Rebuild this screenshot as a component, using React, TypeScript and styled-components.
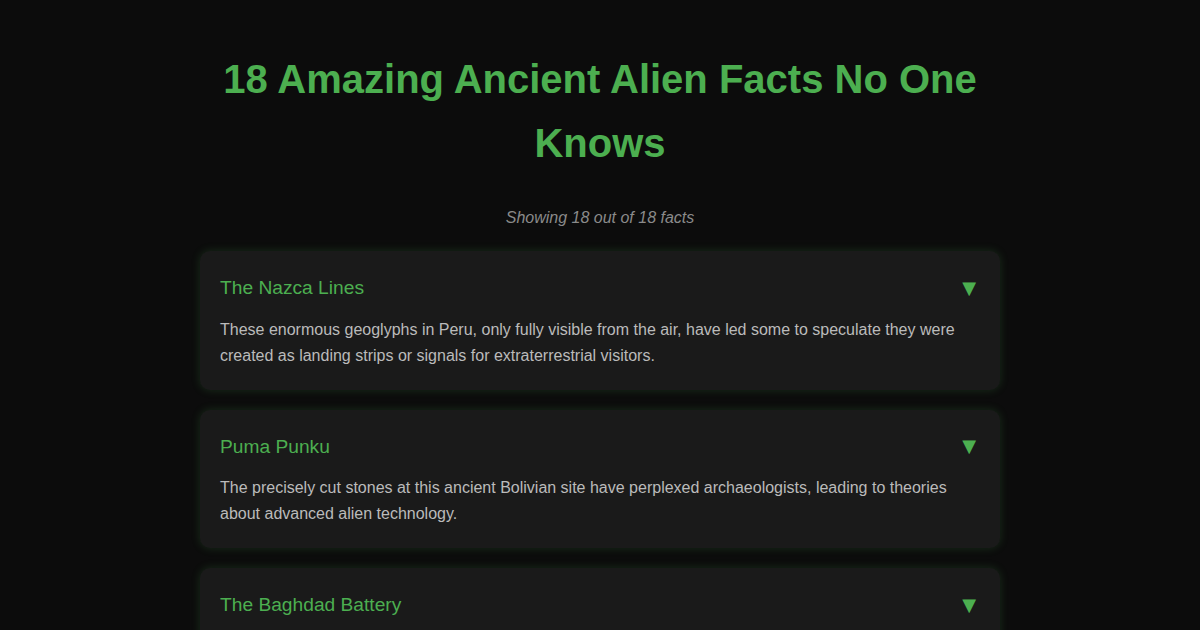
import React from 'react';
import styled, { createGlobalStyle } from 'styled-components';

const GlobalStyle = createGlobalStyle`
  body {
    margin: 0;
    background: #0c0c0c;
    font-family: 'Liberation Sans', Arial, sans-serif;
    color: #bbbbbb;
  }
`;

const Page = styled.div`
  max-width: 800px;
  margin: 0 auto;
  padding: 47px 0 40px;
`;

const Title = styled.h1`
  margin: 0 0 30px;
  font-size: 40px;
  line-height: 64px;
  font-weight: 700;
  text-align: center;
  color: #4caf50;
`;

const Count = styled.p`
  margin: 0 0 20px;
  font-size: 16px;
  line-height: 26px;
  font-style: italic;
  text-align: center;
  color: #8a8a8a;
`;

const List = styled.div`
  display: flex;
  flex-direction: column;
  gap: 20px;
`;

const Card = styled.div`
  background: #1a1a1a;
  border-radius: 10px;
  padding: 20px 20px 21px;
  box-shadow: 0 0 10px rgba(76, 175, 80, 0.2);
`;

const CardHeader = styled.div`
  display: flex;
  align-items: center;
  justify-content: space-between;
  height: 34px;
  margin-bottom: 11.5px;
`;

const FactTitle = styled.h2`
  margin: 0;
  font-size: 19.2px;
  font-weight: 400;
  color: #4caf50;
`;

const Toggle = styled.span`
  font-family: 'DejaVu Sans', sans-serif;
  font-size: 18px;
  color: #4caf50;
  margin-right: 4px;
  margin-bottom: 2px;
`;

const Body = styled.p`
  margin: 0;
  font-size: 16px;
  line-height: 26px;
  color: #bbbbbb;
`;

const facts = [
  {
    title: 'The Nazca Lines',
    text: 'These enormous geoglyphs in Peru, only fully visible from the air, have led some to speculate they were created as landing strips or signals for extraterrestrial visitors.',
  },
  {
    title: 'Puma Punku',
    text: 'The precisely cut stones at this ancient Bolivian site have perplexed archaeologists, leading to theories about advanced alien technology.',
  },
  {
    title: 'The Baghdad Battery',
    text: 'These clay jars containing a copper cylinder and an iron rod are thought by some to be ancient batteries, possibly based on knowledge from visitors.',
  },
];

export default function App() {
  return (
    <>
      <GlobalStyle />
      <Page>
        <Title>18 Amazing Ancient Alien Facts No One Knows</Title>
        <Count>Showing 18 out of 18 facts</Count>
        <List>
          {facts.map((f) => (
            <Card key={f.title}>
              <CardHeader>
                <FactTitle>{f.title}</FactTitle>
                <Toggle>▼</Toggle>
              </CardHeader>
              <Body>{f.text}</Body>
            </Card>
          ))}
        </List>
      </Page>
    </>
  );
}
